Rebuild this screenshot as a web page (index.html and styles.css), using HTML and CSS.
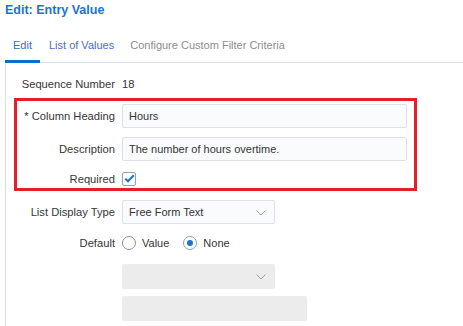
FILE: index.html
```html
<!DOCTYPE html>
<html>
<head>
<meta charset="utf-8">
<link rel="stylesheet" href="styles.css">
</head>
<body>
<h1 class="title">Edit: Entry Value</h1>
<div class="tabs">
  <div class="tab active">Edit</div>
  <div class="tab link">List of Values</div>
  <div class="tab muted">Configure Custom Filter Criteria</div>
</div>
<div class="panel">
  <div class="row seq">
    <div class="lbl">Sequence Number</div>
    <div class="val">18</div>
  </div>
  <div class="highlight">
    <div class="row r-col">
      <div class="lbl"><span class="req">*</span> Column Heading</div>
      <div class="input wide">Hours</div>
    </div>
    <div class="row r-desc">
      <div class="lbl">Description</div>
      <div class="input wide">The number of hours overtime.</div>
    </div>
    <div class="row r-req">
      <div class="lbl">Required</div>
      <div class="checkbox">
        <svg width="11" height="9" viewBox="0 0 11 9"><path d="M1.2 4.6 L4 7.3 L9.8 1.3" fill="none" stroke="#1e6fc8" stroke-width="2"/></svg>
      </div>
    </div>
  </div>
  <div class="row r-ldt">
    <div class="lbl">List Display Type</div>
    <div class="input select">Free Form Text
      <svg class="chev" width="10" height="6" viewBox="0 0 10 6"><path d="M0.5 0.5 L5 5 L9.5 0.5" fill="none" stroke="#a0a0a0" stroke-width="1"/></svg>
    </div>
  </div>
  <div class="row r-def">
    <div class="lbl">Default</div>
    <div class="radios">
      <span class="radio"></span><span class="rtext">Value</span>
      <span class="radio on"></span><span class="rtext">None</span>
    </div>
  </div>
  <div class="row r-gsel">
    <div class="lbl"></div>
    <div class="input gray select">
      <svg class="chev" width="10" height="6" viewBox="0 0 10 6"><path d="M0.5 0.5 L5 5 L9.5 0.5" fill="none" stroke="#a0a0a0" stroke-width="1"/></svg>
    </div>
  </div>
  <div class="row r-gin">
    <div class="lbl"></div>
    <div class="input gray ginput"></div>
  </div>
</div>
</body>
</html>
```
FILE: styles.css
```css
html, body {
  margin: 0;
  padding: 0;
  background: #ffffff;
  font-family: "Liberation Sans", Arial, sans-serif;
  font-size: 11px;
  color: #333333;
  overflow: hidden;
}
.title {
  margin: 0;
  padding: 2px 5px 0;
  font-size: 12.5px;
  line-height: 16px;
  font-weight: bold;
  color: #1a74cf;
}
.tabs {
  display: flex;
  margin: 12px 0 0 5px;
  border-bottom: 1px solid #d8dee4;
  height: 32px;
}
.tab {
  padding: 7px 8px 0;
  line-height: 16px;
  height: 32px;
  box-sizing: border-box;
}
.tab.active {
  color: #2f6fc7;
  border-bottom: 3px solid #0f6dca;
  height: 33px;
  margin-right: 1px;
}
.tab.link { color: #4f6bc6; }
.tab.muted { color: #8d8d8d; }
.panel {
  margin-left: 5px;
  border-left: 1px solid #d8dee4;
  padding-top: 9px;
  height: 254px;
}
.row {
  display: flex;
  align-items: center;
}
.lbl {
  width: 109px;
  flex: none;
  text-align: right;
  margin-right: 7px;
  color: #363636;
  line-height: 16px;
  font-size: 11.2px;
}
.seq { height: 24px; }
.val { color: #333; font-size: 11.2px; }
.highlight {
  margin: 2px 0 0 8px;
  width: 403px;
  box-sizing: border-box;
  border: 3px solid #e61e2b;
  padding: 3px 0 1px;
}
.highlight .lbl { width: 98px; }
.req { color: #333; }
.input {
  height: 24px;
  box-sizing: border-box;
  border: 1px solid #dde1e6;
  border-radius: 2px;
  background: #fafbfd;
  padding: 0 6px;
  line-height: 22px;
  color: #333;
  position: relative;
}
.wide { width: 285px; }
.r-desc { margin-top: 9px; }
.r-req { margin-top: 9px; height: 17px; }
.checkbox {
  width: 14px;
  height: 14px;
  box-sizing: border-box;
  border: 1px solid #8fa3b8;
  border-radius: 2px;
  background: #fff;
  display: flex;
  align-items: center;
  justify-content: center;
}
.r-ldt { margin-top: 9px; }
.select { width: 153px; }
.chev {
  position: absolute;
  right: 8px;
  top: 9px;
}
.r-def { margin-top: 7px; height: 24px; }
.radios {
  display: flex;
  align-items: center;
}
.radio {
  width: 14px;
  height: 14px;
  box-sizing: border-box;
  border: 1px solid #8f8f8f;
  border-radius: 50%;
  background: #fff;
  position: relative;
}
.radio.on { border-color: #8aa0b8; }
.radio.on::after {
  content: "";
  position: absolute;
  left: 3px;
  top: 3px;
  width: 6px;
  height: 6px;
  border-radius: 50%;
  background: #1a73d0;
}
.rtext {
  margin-left: 6px;
  margin-right: 14px;
  color: #333;
}
.r-gsel { margin-top: 9px; }
.gray {
  background: #ececec;
  border-color: #ececec;
}
.r-gsel .input { height: 25px; }
.r-gin { margin-top: 7px; }
.ginput { width: 185px; height: 25px; }
```
